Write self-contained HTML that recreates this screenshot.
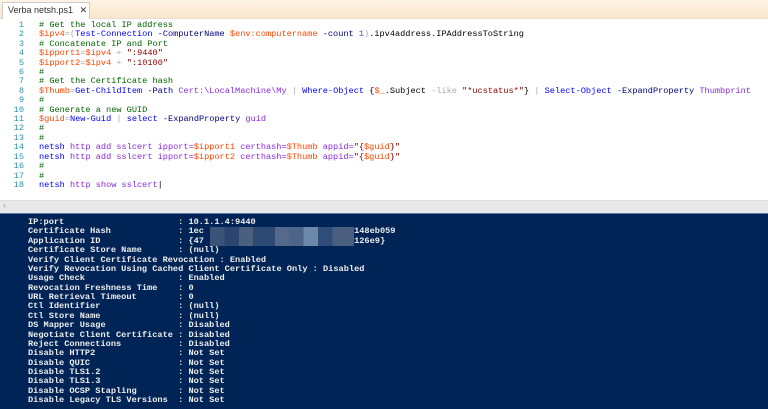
<!DOCTYPE html>
<html><head><meta charset="utf-8"><style>
body{margin:0;width:768px;height:408px;overflow:hidden;background:#fff;position:relative;font-family:"Liberation Mono",monospace}
.tabbar{position:absolute;left:0;top:0;width:768px;height:18px;background:linear-gradient(#fdf3e6,#fbe6cc);border-bottom:1px solid #e5ded5}
.tab{position:absolute;left:2px;top:2px;width:88px;height:17px;background:#fff;border:1px solid #ccc;border-bottom:none;font:9px "Liberation Sans",sans-serif;color:#333;line-height:15px;padding-left:5px;box-sizing:border-box;white-space:nowrap}
.code{position:absolute;top:21px;left:0;font-size:8.6px;line-height:9.4px}
.ln{position:absolute;top:0;left:0;width:24px;text-align:right;color:#2b91af}
.tx{position:absolute;top:0;left:39px;white-space:pre}
.c{color:#006400}.v{color:#ff4500}.k{color:#0000ff}.p{color:#000080}.s{color:#8b0000}.a{color:#8a2be2}.o{color:#a9a9a9}
.sb{position:absolute;left:0;top:200px;width:768px;height:12px;background:#e8e8e8;border-top:1px solid #ddd}
.con{position:absolute;left:0;top:213px;width:768px;height:195px;background:#012456;border-top:1px solid #5a7fb0}
.ct{position:absolute;left:28px;top:4px;color:#eee;font-size:8.65px;line-height:9.37px;white-space:pre;font-weight:bold}
.blk{position:absolute}
</style></head><body>
<div class="tabbar"><div class="tab">Verba netsh.ps1 <span style="margin-left:4px">✕</span></div></div>
<div class="code"><div class="ln">1<br>2<br>3<br>4<br>5<br>6<br>7<br>8<br>9<br>10<br>11<br>12<br>13<br>14<br>15<br>16<br>17<br>18</div><div class="tx"><span class="c"># Get the local IP address</span>
<span class="v">$ipv4</span><span class="o">=(</span><span class="k">Test-Connection</span> <span class="p">-ComputerName</span> <span class="v">$env:computername</span> <span class="p">-count</span> <span class="a">1</span><span class="o">)</span>.ipv4address.IPAddressToString
<span class="c"># Concatenate IP and Port</span>
<span class="v">$ipport1</span><span class="o">=</span><span class="v">$ipv4</span> <span class="o">+</span> <span class="s">":9440"</span>
<span class="v">$ipport2</span><span class="o">=</span><span class="v">$ipv4</span> <span class="o">+</span> <span class="s">":10100"</span>
<span class="c">#</span>
<span class="c"># Get the Certificate hash</span>
<span class="v">$Thumb</span><span class="o">=</span><span class="k">Get-ChildItem</span> <span class="p">-Path</span> <span class="a">Cert:\LocalMachine\My</span> <span class="o">|</span> <span class="k">Where-Object</span> {<span class="v">$_</span>.Subject <span class="o">-like</span> <span class="s">"*ucstatus*"</span>} <span class="o">|</span> <span class="k">Select-Object</span> <span class="p">-ExpandProperty</span> <span class="a">Thumbprint</span>
<span class="c">#</span>
<span class="c"># Generate a new GUID</span>
<span class="v">$guid</span><span class="o">=</span><span class="k">New-Guid</span> <span class="o">|</span> <span class="k">select</span> <span class="p">-ExpandProperty</span> <span class="a">guid</span>
<span class="c">#</span>
<span class="c">#</span>
<span class="k">netsh</span> <span class="a">http add sslcert ipport=</span><span class="v">$ipport1</span> <span class="a">certhash=</span><span class="v">$Thumb</span> <span class="a">appid=</span><span class="s">"{</span><span class="v">$guid</span><span class="s">}"</span>
<span class="k">netsh</span> <span class="a">http add sslcert ipport=</span><span class="v">$ipport2</span> <span class="a">certhash=</span><span class="v">$Thumb</span> <span class="a">appid=</span><span class="s">"{</span><span class="v">$guid</span><span class="s">}"</span>
<span class="c">#</span>
<span class="c">#</span>
<span class="k">netsh</span> <span class="a">http show sslcert</span>|</div></div>
<div class="sb"><span style="position:absolute;left:3px;top:-1px;font:9px sans-serif;color:#999">‹</span></div>
<div class="con">
<div class="ct">IP:port                      : 10.1.1.4:9440
Certificate Hash             : 1ec                             148eb059
Application ID               : {47                             126e9}
Certificate Store Name       : (null)
Verify Client Certificate Revocation : Enabled
Verify Revocation Using Cached Client Certificate Only : Disabled
Usage Check                  : Enabled
Revocation Freshness Time    : 0
URL Retrieval Timeout        : 0
Ctl Identifier               : (null)
Ctl Store Name               : (null)
DS Mapper Usage              : Disabled
Negotiate Client Certificate : Disabled
Reject Connections           : Disabled
Disable HTTP2                : Not Set
Disable QUIC                 : Not Set
Disable TLS1.2               : Not Set
Disable TLS1.3               : Not Set
Disable OCSP Stapling        : Not Set
Disable Legacy TLS Versions  : Not Set</div>
<div class="blk" style="left:210px;top:13px;width:144px;height:19px;background:linear-gradient(90deg,#3a5478 0 10%,#2a4670 10% 20%,#4b5f7e 20% 30%,#2c4a73 30% 45%,#55698a 45% 55%,#4d6588 55% 65%,#6c89aa 65% 75%,#2e4d78 75% 85%,#4a5f80 85% 100%)"></div>
</div>
</body></html>
